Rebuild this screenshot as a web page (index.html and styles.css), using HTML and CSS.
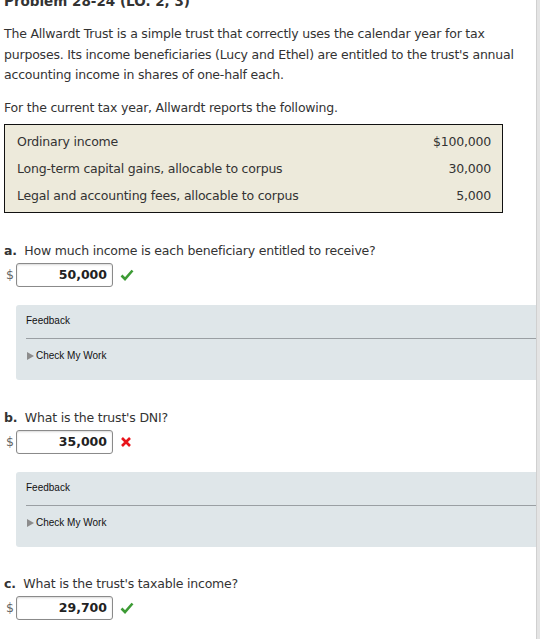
FILE: index.html
```html
<!DOCTYPE html>
<html>
<head>
<meta charset="utf-8">
<link rel="stylesheet" href="styles.css">
</head>
<body>
<div class="page">
  <div class="content">
    <h2 class="title">Problem 28-24 (LO. 2, 3)</h2>
    <p class="intro">The Allwardt Trust is a simple trust that correctly uses the calendar year for tax purposes. Its income beneficiaries (Lucy and Ethel) are entitled to the trust's annual accounting income in shares of one-half each.</p>
    <p class="lead">For the current tax year, Allwardt reports the following.</p>
    <div class="data">
      <div class="row"><span>Ordinary income</span><span>$100,000</span></div>
      <div class="row"><span>Long-term capital gains, allocable to corpus</span><span>30,000</span></div>
      <div class="row"><span>Legal and accounting fees, allocable to corpus</span><span>5,000</span></div>
    </div>

    <div class="q q-a"><b>a.</b>&nbsp; How much income is each beneficiary entitled to receive?</div>
    <div class="answer">
      <span class="dollar">$</span>
      <span class="field">50,000</span>
      <svg class="mark" width="14" height="12" viewBox="0 0 14 12"><path d="M1.5 6.5 L5 10 L12.5 1.5" fill="none" stroke="#3d9b35" stroke-width="2.6"/></svg>
    </div>
    <div class="feedback">
      <div class="fb-head">Feedback</div>
      <div class="fb-body"><span class="tri"></span>Check My Work</div>
    </div>

    <div class="q q-b"><b>b.</b>&nbsp; What is the trust's DNI?</div>
    <div class="answer">
      <span class="dollar">$</span>
      <span class="field">35,000</span>
      <svg class="mark" width="12" height="12" viewBox="0 0 12 12"><path d="M2 2 L10 10 M10 2 L2 10" fill="none" stroke="#e8141b" stroke-width="2.6"/></svg>
    </div>
    <div class="feedback">
      <div class="fb-head">Feedback</div>
      <div class="fb-body"><span class="tri"></span>Check My Work</div>
    </div>

    <div class="q q-c"><b>c.</b>&nbsp; What is the trust's taxable income?</div>
    <div class="answer">
      <span class="dollar">$</span>
      <span class="field">29,700</span>
      <svg class="mark" width="14" height="12" viewBox="0 0 14 12"><path d="M1.5 6.5 L5 10 L12.5 1.5" fill="none" stroke="#3d9b35" stroke-width="2.6"/></svg>
    </div>
  </div>
  <div class="scrollbar"></div>
</div>
</body>
</html>
```
FILE: styles.css
```css
html, body {
  margin: 0;
  padding: 0;
  background: #fff;
  overflow: hidden;
}
.page {
  display: flex;
  width: 540px;
  height: 639px;
  overflow: hidden;
}
.content {
  flex: 1;
  padding-left: 4px;
  font-family: "DejaVu Sans", Verdana, sans-serif;
  font-size: 12.5px;
  color: #333;
}
.scrollbar {
  width: 3px;
  background: #e4e4e4;
  border-left: 1px solid #d0d0d0;
}
.title {
  margin: -7px 0 0 0;
  font-size: 13.5px;
  line-height: 17px;
  font-weight: bold;
}
.intro {
  margin: 14px 0 0 0;
  line-height: 20.5px;
  letter-spacing: -0.2px;
}
.lead {
  margin: 12px 0 0 0;
  line-height: 20px;
  letter-spacing: -0.2px;
}
.data {
  margin-top: 6px;
  width: 474px;
  border: 1px solid #111;
  background: #edeadb;
  padding: 3px 11px 3px 12px;
}
.row {
  display: flex;
  justify-content: space-between;
  height: 27px;
  align-items: center;
  letter-spacing: -0.2px;
}
.q {
  line-height: 20px;
  letter-spacing: -0.2px;
}
.q b { color: #333; }
.q-a { margin-top: 28px; }
.q-b { margin-top: 28px; }
.q-c { margin-top: 27px; }
.answer {
  display: flex;
  align-items: center;
  height: 24px;
  margin-top: 2px;
}
.dollar {
  color: #666;
  width: 10px;
  margin-left: 2px;
}
.field {
  box-sizing: border-box;
  width: 97px;
  height: 24px;
  border: 1px solid #8a8a8a;
  border-radius: 3px;
  box-shadow: inset 0 1px 2px rgba(0,0,0,0.15);
  text-align: right;
  font-weight: bold;
  padding: 0 5px 0 0;
  line-height: 22px;
  font-size: 12.5px;
  color: #222;
  background: #fff;
}
.mark {
  margin-left: 7px;
}
.feedback {
  margin: 18px 0 0 12px;
  background: #dfe6e9;
  border-radius: 3px 0 0 3px;
  height: 75px;
  padding-left: 10px;
  font-family: "Liberation Sans", Arial, sans-serif;
  font-size: 10px;
  color: #111;
}
.fb-head {
  height: 32px;
  line-height: 30px;
  border-bottom: 1px solid #9a9fa3;
  padding-top: 1px;
}
.fb-body {
  padding-top: 10px;
  line-height: 14px;
  display: flex;
  align-items: center;
}
.tri {
  width: 0;
  height: 0;
  border-left: 7px solid #8c8c8c;
  border-top: 4px solid transparent;
  border-bottom: 4px solid transparent;
  margin-right: 2px;
  margin-left: 1px;
}
```
